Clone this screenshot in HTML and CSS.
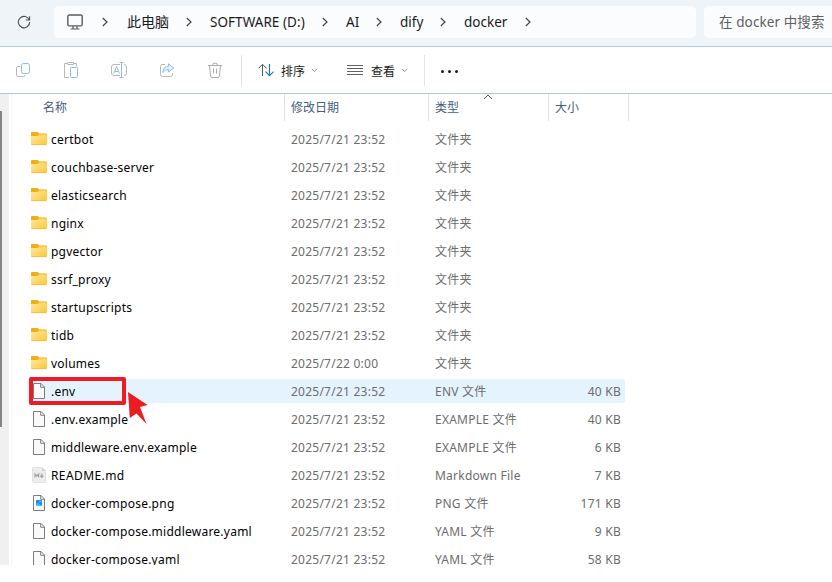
FILE: index.html
```html
<!DOCTYPE html>
<html lang="zh-CN">
<head>
    <meta charset="UTF-8">
    <meta name="viewport" content="width=device-width, initial-scale=1.0">
    <title>docker</title>
    <link rel="stylesheet" href="styles.css">
</head>
<body>
    <svg class="defs" aria-hidden="true">
        <defs>
            <linearGradient id="folderFill" x1="0" y1="0" x2="1" y2="1">
                <stop offset="0" stop-color="#ffe8a3"/>
                <stop offset="1" stop-color="#fcc936"/>
            </linearGradient>
        </defs>
        <symbol id="folder" viewBox="0 0 16 16">
            <path d="M0 2Q0 1 1 1H6.5L8 2.500H15Q16 2.500 16 3.800V6H0z" fill="#f0ae10"/>
            <path d="M0 5H6.500L8.200 3.500H15.200Q16 3.500 16 4.300V13Q16 13.800 15.200 13.800H.8Q0 13.800 0 13z" fill="url(#folderFill)"/>
            <path d="M.6 13.600H15.400" stroke="#efb52c" stroke-width=".8"/>
        </symbol>
        <symbol id="file" viewBox="0 0 16 16">
            <path d="M2.5.5H10L13.5 4V15.5H2.5z" fill="#fafafa" stroke="#7d7d7d"/>
            <path d="M9.7.5V4.3H13.5" fill="none" stroke="#7d7d7d"/>
        </symbol>
        <symbol id="file-md" viewBox="0 0 16 16">
            <path d="M2.5.5H11L14.5 4V15.5H2.5Q1.5 15.5 1.5 14.5V1.5Q1.5.5 2.5.5z" fill="#ededed" stroke="#e0e0e0"/>
            <path d="M11 .5V4H14.5z" fill="#cfcfcf"/>
            <path d="M4 10.5V7L5.8 9L7.6 7V10.5M10.8 6.5V10M9.2 8.7L10.8 10.4L12.4 8.7" fill="none" stroke="#a0a0a0" stroke-width="1.2"/>
        </symbol>
        <symbol id="file-png" viewBox="0 0 16 16">
            <use href="#file"/>
            <rect x="5" y="5" width="6" height="6" rx=".6" fill="#1490ec"/>
            <path d="M5 9.5L7 8L11 11H5z" fill="#50bdfb"/>
            <rect x="8.5" y="6" width="1.2" height="1.2" fill="#a5dcff"/>
        </symbol>
        <symbol id="chevron" viewBox="0 0 8 10">
            <path d="M1.8 1L6 5L1.8 9" fill="none" stroke="#454545" stroke-width="1.2"/>
        </symbol>
        <symbol id="chevron-down" viewBox="0 0 7 5">
            <path d="M.8 .9L3.5 3.6L6.2 .9" fill="none" stroke="#8f8f8f"/>
        </symbol>
    </svg>

    <div class="address-bar">
        <svg class="refresh" viewBox="0 0 14 14">
            <path d="M12.3 5A5.7 5.7 0 1 0 12.7 7M12.6 1.2V5H8.8" fill="none" stroke="#505050" stroke-width="1.1"/>
        </svg>
        <div class="path">
            <svg class="monitor" viewBox="0 0 16 16">
                <rect x=".8" y="1" width="14.4" height="10.9" rx="1.6" fill="none" stroke="#5b5b5b" stroke-width="1.4"/>
                <path d="M6 12V14.6M10 12V14.6M3.5 15H12.5" stroke="#5b5b5b" stroke-width="1.2"/>
            </svg>
            <svg class="sep sep-first"><use href="#chevron"/></svg>
            <span class="crumb crumb-pc">此电脑</span>
            <svg class="sep"><use href="#chevron"/></svg>
            <span class="crumb crumb-drive">SOFTWARE (D:)</span>
            <svg class="sep"><use href="#chevron"/></svg>
            <span class="crumb crumb-ai">AI</span>
            <svg class="sep"><use href="#chevron"/></svg>
            <span class="crumb crumb-dify">dify</span>
            <svg class="sep"><use href="#chevron"/></svg>
            <span class="crumb crumb-docker">docker</span>
            <svg class="sep"><use href="#chevron"/></svg>
        </div>
        <div class="search">在 docker 中搜索</div>
    </div>

    <div class="toolbar">
        <div class="actions">
            <svg viewBox="0 0 16 16" fill="none">
                <path d="M5 4.500H3Q1.500 4.500 1.500 6V13Q1.500 14.500 3 14.500H8.500Q10 14.500 10.300 13" stroke="#b8b8b8"/>
                <rect x="6.500" y="1.500" width="8" height="10" rx="1.800" stroke="#8cc0ea"/>
            </svg>
            <svg viewBox="0 0 16 16" fill="none">
                <path d="M4.500 1.500H1.500V15.500H6M10.500 1.500H13.500V4.500M4.500 .5H10.500V2.500H4.500z" stroke="#b8b8b8"/>
                <rect x="7.500" y="5.500" width="7" height="10" rx=".8" fill="#fff" stroke="#8cc0ea"/>
            </svg>
            <svg viewBox="0 0 16 16" fill="none">
                <path d="M9 2.500H3Q.5 2.500 .5 5V11Q.5 13.500 3 13.500H9M13 2.500Q15.500 2.500 15.500 5V11Q15.500 13.500 13 13.500" stroke="#b8b8b8"/>
                <path d="M2.800 11.500L5.700 4.500L8.600 11.500M4 9.500H7.500M10.500 .8V15.300M8.500 .5H12.500M8.500 15.500H12.500" stroke="#8cc0ea"/>
            </svg>
            <svg viewBox="0 0 16 16" fill="none">
                <path d="M6 2.500H3Q1.500 2.500 1.500 4.500V12.500Q1.500 14.500 3.500 14.500H11.500Q13.500 14.500 13.500 12.500V11" stroke="#b8b8b8"/>
                <path d="M9.500 1.800L14.800 6L9.500 10V7.600Q6 7.200 3.800 10.500Q4.200 4.400 9.500 4.200z" stroke="#8cc0ea" fill="#e2f1fc"/>
            </svg>
            <svg viewBox="0 0 16 16" fill="none">
                <path d="M1 3.500H15M5.500 3.500Q5.500 1 8 1Q10.500 1 10.500 3.500M2.500 3.500L3.600 14Q3.800 15.500 5 15.500H11Q12.200 15.500 12.400 14L13.500 3.500M6.500 6.500V11.500M9.500 6.500V11.500" stroke="#aaa"/>
            </svg>
        </div>
        <div class="tool sort">
            <svg class="tool-icon" viewBox="0 0 16 14" fill="none">
                <path d="M4.500 13V1.500M.5 5.300L4.500 1.300L8.500 5.300" stroke="#555"/>
                <path d="M11.500 1V12.500M7.500 8.700L11.500 12.700L15.500 8.700" stroke="#1975c5" stroke-width="1.100"/>
            </svg>
            <span>排序</span>
            <svg class="caret"><use href="#chevron-down"/></svg>
        </div>
        <div class="tool view">
            <svg class="tool-icon" viewBox="0 0 16 14">
                <path d="M0 2.500H16M0 5.500H16M0 8.500H16M0 11.500H16" stroke="#606060"/>
            </svg>
            <span>查看</span>
            <svg class="caret"><use href="#chevron-down"/></svg>
        </div>
        <div class="tool more"><i></i><i></i><i></i></div>
    </div>

    <div class="main">
        <div class="nav-scroll"><div class="thumb"></div></div>
        <div class="list">
            <div class="columns">
                <div>名称</div>
                <div>修改日期</div>
                <div>类型<svg class="sort-mark" viewBox="0 0 10 6"><path d="M1 5L5 1L9 5" fill="none" stroke="#555"/></svg></div>
                <div>大小</div>
            </div>

            <div class="row"><svg><use href="#folder"/></svg><span class="name">certbot</span><span>2025/7/21 23:52</span><span>文件夹</span></div>
            <div class="row"><svg><use href="#folder"/></svg><span class="name">couchbase-server</span><span>2025/7/21 23:52</span><span>文件夹</span></div>
            <div class="row"><svg><use href="#folder"/></svg><span class="name">elasticsearch</span><span>2025/7/21 23:52</span><span>文件夹</span></div>
            <div class="row"><svg><use href="#folder"/></svg><span class="name">nginx</span><span>2025/7/21 23:52</span><span>文件夹</span></div>
            <div class="row"><svg><use href="#folder"/></svg><span class="name">pgvector</span><span>2025/7/21 23:52</span><span>文件夹</span></div>
            <div class="row"><svg><use href="#folder"/></svg><span class="name">ssrf_proxy</span><span>2025/7/21 23:52</span><span>文件夹</span></div>
            <div class="row"><svg><use href="#folder"/></svg><span class="name">startupscripts</span><span>2025/7/21 23:52</span><span>文件夹</span></div>
            <div class="row"><svg><use href="#folder"/></svg><span class="name">tidb</span><span>2025/7/21 23:52</span><span>文件夹</span></div>
            <div class="row"><svg><use href="#folder"/></svg><span class="name">volumes</span><span>2025/7/22 0:00</span><span>文件夹</span></div>
            <div class="row selected">
                <svg><use href="#file"/></svg><span class="name">.env</span><span>2025/7/21 23:52</span><span>ENV 文件</span><span class="size">40 KB</span>
                <div class="mark"></div>
                <svg class="pointer" viewBox="0 0 20 33"><path d="M0 0L19.500 13L12 15L18.500 32L8.500 21.500L1.800 26z" fill="#ec1c24"/></svg>
            </div>
            <div class="row"><svg><use href="#file"/></svg><span class="name">.env.example</span><span>2025/7/21 23:52</span><span>EXAMPLE 文件</span><span class="size">40 KB</span></div>
            <div class="row"><svg><use href="#file"/></svg><span class="name">middleware.env.example</span><span>2025/7/21 23:52</span><span>EXAMPLE 文件</span><span class="size">6 KB</span></div>
            <div class="row"><svg><use href="#file-md"/></svg><span class="name readme">README.md</span><span>2025/7/21 23:52</span><span>Markdown File</span><span class="size">7 KB</span></div>
            <div class="row"><svg><use href="#file-png"/></svg><span class="name">docker-compose.png</span><span>2025/7/21 23:52</span><span>PNG 文件</span><span class="size">171 KB</span></div>
            <div class="row"><svg><use href="#file"/></svg><span class="name">docker-compose.middleware.yaml</span><span>2025/7/21 23:52</span><span>YAML 文件</span><span class="size">9 KB</span></div>
            <div class="row"><svg><use href="#file"/></svg><span class="name">docker-compose.yaml</span><span>2025/7/21 23:52</span><span>YAML 文件</span><span class="size">58 KB</span></div>
        </div>
    </div>
</body>
</html>
```
FILE: styles.css
```css
* {
    box-sizing: border-box;
}
body {
    margin: 0;
    height: 582px;
    overflow: hidden;
    background: #fff;
    color: #1a1a1a;
    font-family: "Noto Sans", "Noto Sans CJK SC", sans-serif;
    font-size: 12px;
}
svg {
    display: block;
    flex: none;
}
.defs {
    position: absolute;
    width: 0;
    height: 0;
}

/* address bar */
.address-bar {
    display: flex;
    height: 47px;
    padding-top: 6px;
    background: #eef4f8;
    border-bottom: 1px solid #b5cad8;
}
.refresh {
    width: 14px;
    height: 14px;
    margin: 9px 23px 0 17px;
}
.path {
    display: flex;
    align-items: center;
    width: 642px;
    height: 32px;
    padding-left: 13px;
    background: #fbfcfe;
    border-radius: 5px;
    font-size: 13.5px;
}
.monitor {
    width: 16px;
    height: 16px;
}
.sep {
    width: 8px;
    height: 10px;
    margin-right: 17px;
}
.sep-first {
    margin: 0 18px 0 18px;
}
.crumb {
    white-space: nowrap;
}
.crumb-pc {
    width: 58px;
    line-height: 20px;
    padding-bottom: 1px;
    font-size: 14px;
}
.crumb-drive {
    width: 111px;
    letter-spacing: 0.05px;
}
.crumb-ai {
    width: 29px;
}
.crumb-dify {
    width: 39px;
}
.crumb-docker {
    width: 60px;
}
.search {
    flex: 1;
    height: 32px;
    margin-left: 8px;
    padding-left: 15px;
    background: #fbfcfe;
    border-radius: 5px 0 0 5px;
    color: #5e5e5e;
    font-size: 13.5px;
    letter-spacing: 0.1px;
    line-height: 32px;
    white-space: nowrap;
}

/* toolbar */
.toolbar {
    display: flex;
    align-items: center;
    height: 47px;
    border-bottom: 1px solid #b8c6d1;
}
.actions {
    display: flex;
    gap: 32px;
    height: 31px;
    width: 242px;
    padding-left: 15px;
    align-items: center;
    border-right: 1px solid #e5e5e5;
}
.actions svg {
    width: 16px;
    height: 16px;
}
.tool {
    display: flex;
    align-items: center;
}
.tool span {
    padding-top: 2px;
}
.tool-icon {
    width: 16px;
    height: 14px;
    margin-right: 8px;
}
.caret {
    width: 7px;
    height: 5px;
    margin-left: 6px;
}
.sort {
    padding-left: 16px;
}
.sort .tool-icon {
    margin-right: 7px;
}
.view {
    height: 31px;
    width: 107px;
    padding-left: 29px;
    border-right: 1px solid #e5e5e5;
}
.more {
    gap: 4px;
    padding: 3px 0 0 16px;
}
.more i {
    width: 3px;
    height: 3px;
    border-radius: 50%;
    background: #1c1c1c;
}

/* file list */
.main {
    display: flex;
    height: 471px;
    overflow: hidden;
}
.nav-scroll {
    width: 9px;
    background: #f0f0f0;
}
.thumb {
    width: 2px;
    height: 316px;
    margin-top: 17px;
    background: #858585;
}
.list {
    flex: 1;
    margin-left: 2px;
    border-left: 1px solid #f5f5f5;
}
.columns {
    display: grid;
    grid-template-columns: 273px 144px 120px 80px;
    height: 27px;
    margin-bottom: 6px;
    line-height: 27px;
    color: #46607c;
}
.columns div {
    position: relative;
    padding-left: 6px;
    border-right: 1px solid #e2e2e2;
}
.columns div:first-child {
    padding-left: 31px;
}
.sort-mark {
    position: absolute;
    top: 0;
    left: 54px;
    width: 10px;
    height: 6px;
}
.row {
    display: grid;
    grid-template-columns: 20px 240px 144px 120px 66px;
    align-items: center;
    position: relative;
    width: 598px;
    height: 24px;
    margin: 0 0 4px 15px;
    padding-left: 4px;
    border-radius: 2px;
    color: #6d6d6d;
    letter-spacing: 0.24px;
    white-space: nowrap;
}
.row svg {
    width: 16px;
    height: 16px;
}
.name {
    color: #000;
}
.readme {
    letter-spacing: 0.4px;
}
.size {
    text-align: right;
}
.selected {
    background: #e5f3ff;
}
/* red frame and arrow on the selected file */
.mark {
    position: absolute;
    left: 2px;
    top: -2px;
    width: 97px;
    height: 28px;
    border: 4px solid #ec1c24;
    border-radius: 2px;
}
.row .pointer {
    position: absolute;
    left: 101px;
    top: 13px;
    width: 20px;
    height: 33px;
    z-index: 1;
}
```
